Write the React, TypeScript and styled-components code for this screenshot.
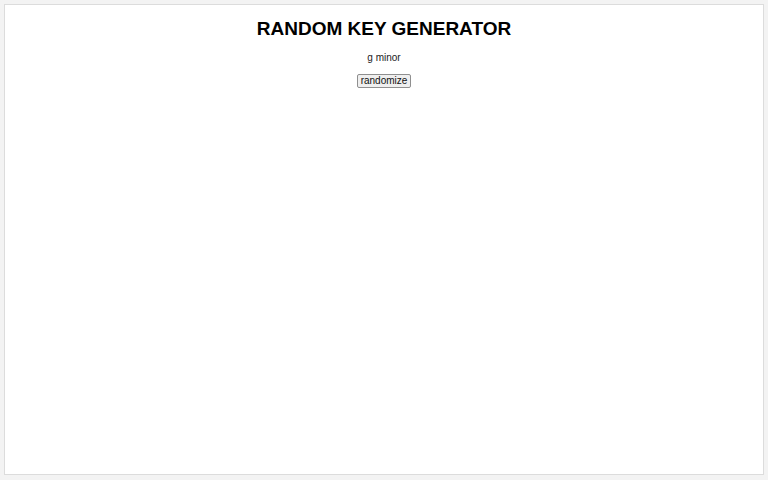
import React, { useState } from "react";
import styled, { createGlobalStyle } from "styled-components";

const GlobalStyle = createGlobalStyle`
  html, body {
    margin: 0;
    padding: 0;
    background: #f3f3f3;
    font-family: "Liberation Sans", Arial, sans-serif;
  }
`;

const Page = styled.div`
  box-sizing: border-box;
  height: 480px;
  padding: 4px 4px 5px 4px;
`;

const Panel = styled.main`
  box-sizing: border-box;
  height: 100%;
  background: #fff;
  border: 1px solid #dcdcdc;
  display: flex;
  flex-direction: column;
  align-items: center;
  padding-top: 13px;
`;

const Title = styled.h1`
  margin: 0;
  font-size: 19px;
  font-weight: bold;
  color: #000;
  line-height: 22px;
`;

const KeyName = styled.p`
  margin: 12px 0 0;
  font-size: 10px;
  line-height: 12px;
  color: #222;
`;

const RandomButton = styled.button`
  margin-top: 10px;
  font-family: "Liberation Sans", Arial, sans-serif;
  font-size: 10px;
  line-height: 12px;
  padding: 0 3px;
  color: #111;
  background: #efefef;
  border: 1px solid #8f8f8f;
  border-radius: 2px;
  cursor: pointer;
`;

const notes = ["c", "c#", "d", "eb", "e", "f", "f#", "g", "ab", "a", "bb", "b"];
const modes = ["major", "minor"];

export default function App() {
  const [key, setKey] = useState("g minor");

  const randomize = () => {
    const n = notes[Math.floor(Math.random() * notes.length)];
    const m = modes[Math.floor(Math.random() * modes.length)];
    setKey(`${n} ${m}`);
  };

  return (
    <>
      <GlobalStyle />
      <Page>
        <Panel>
          <Title>RANDOM KEY GENERATOR</Title>
          <KeyName>{key}</KeyName>
          <RandomButton onClick={randomize}>randomize</RandomButton>
        </Panel>
      </Page>
    </>
  );
}
